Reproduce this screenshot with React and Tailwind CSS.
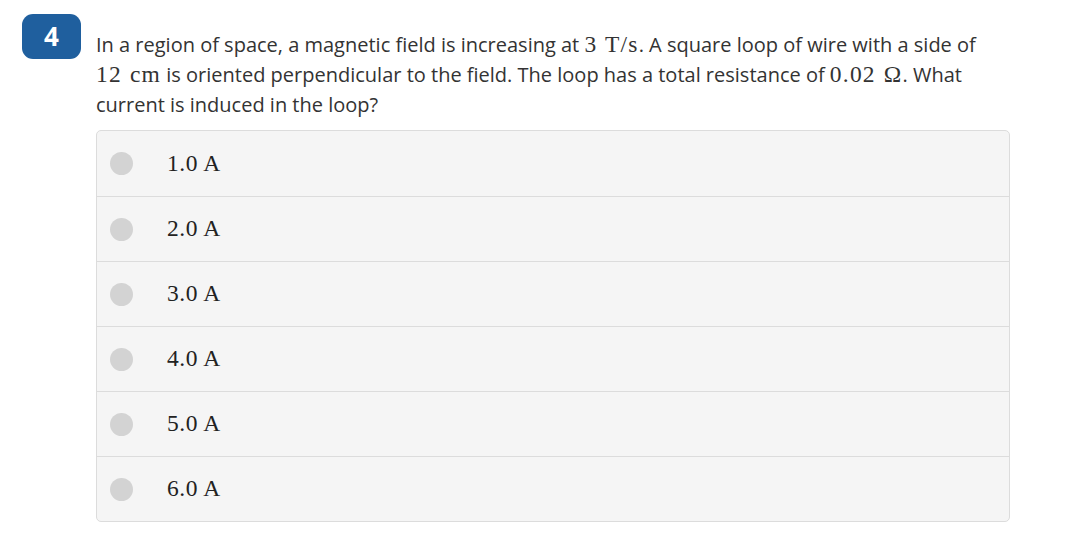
export default function App() {
  const opts = ["1.0", "2.0", "3.0", "4.0", "5.0", "6.0"];
  const math = { fontFamily: '"Liberation Serif", "DejaVu Serif", serif' };
  const M = ({ children }) => (
    <span className="text-[23.5px] leading-[20px] tracking-[1.2px] [word-spacing:1px] whitespace-nowrap" style={math}>{children}</span>
  );
  return (
    <div className="w-[1085px] h-[550px] bg-white flex items-start pl-[22px] pt-[14px]" style={{ fontFamily: '"Open Sans", sans-serif' }}>
      <div className="w-[59px] h-[45px] rounded-[11px] bg-[#1f5f9e] text-white flex items-center justify-center text-[26px] font-bold shrink-0">
        4
      </div>
      <div className="ml-[15px] pt-[16px] w-[914px]">
        <p className="text-[20px] leading-[30px] text-[#333] pr-[18px]">
          In a region of space, a magnetic field is increasing at <M>3 T/s</M>. A square loop of wire with a side of <M>12 cm</M> is oriented perpendicular to the field. The loop has a total resistance of <M>0.02 Ω</M>. What current is induced in the loop?
        </p>
        <div className="mt-[10px] border border-[#dcdcdc] rounded-[5px] bg-[#f5f5f5] overflow-hidden">
          {opts.map((o, i) => (
            <div key={o} className={`h-[65px] flex items-center ${i > 0 ? "border-t border-[#dcdcdc]" : ""}`}>
              <div className="ml-[13px] w-[23px] h-[23px] rounded-full bg-[#d3d3d3]" />
              <span className="ml-[34px] text-[23.5px] tracking-[0.6px] text-[#222]" style={math}>{o} A</span>
            </div>
          ))}
        </div>
      </div>
    </div>
  );
}
